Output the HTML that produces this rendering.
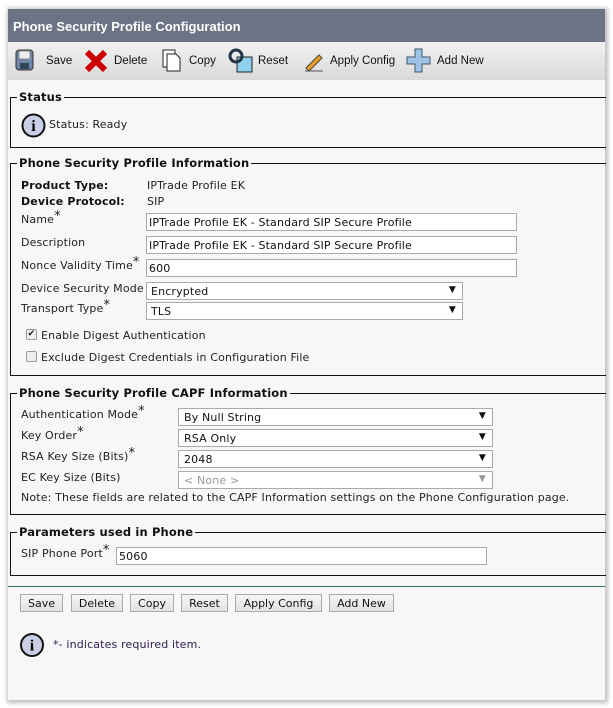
<!DOCTYPE html>
<html><head><meta charset="utf-8"><style>
*{box-sizing:border-box;margin:0;padding:0}
body{width:613px;height:708px;background:#fff;position:relative;overflow:hidden;font-family:"DejaVu Sans","Liberation Sans",sans-serif;font-size:11px;letter-spacing:0.15px;color:#222}
.a{position:absolute;white-space:nowrap}
#panel{position:absolute;left:8px;top:9px;width:597px;height:691px;background:#f7f7f7;box-shadow:1px 1px 4px 2px rgba(0,0,0,.25)}
#hdr{position:absolute;left:8px;top:9px;width:597px;height:33px;background:#6b7385;color:#fff;font:bold 13px "Liberation Sans",sans-serif;letter-spacing:0;padding:10px 0 0 5px}
#tb{position:absolute;left:8px;top:42px;width:597px;height:38px;background:linear-gradient(#f2f2f2,#d9d9d9)}
.tl{position:absolute;top:55px;font:11.5px "Liberation Sans",sans-serif;letter-spacing:0;color:#111}
.fs{position:absolute;left:10px;width:596px;border:1px solid #111;border-right:none}
.lg{position:absolute;top:-8px;left:6px;background:#f7f7f7;padding:0 2px 0 2px;font-weight:bold;font-size:11.5px;color:#111}
.in{position:absolute;height:18px;background:#fff;border:1px solid #aaa;padding:2px 2px;font-size:11px;color:#111}
.sel::after{content:"▼";position:absolute;right:6px;top:2px;font-size:9px;color:#111}
.dis{color:#999}.dis::after{color:#999}
.b{font-weight:bold;color:#111}
.btn{position:absolute;top:594px;height:18px;border:1px solid #aaa;background:linear-gradient(#f6f6f6,#e2e2e2);font-size:11px;letter-spacing:0;text-align:center;padding-top:2px;color:#111}
sup{font-size:13px;vertical-align:3px;line-height:0}
.cb{position:absolute;width:11px;height:11px;border:1px solid #999;border-radius:2px;background:#eee}
</style></head><body>
<div id="panel"></div>
<div id="hdr">Phone Security Profile Configuration</div>
<div id="tb"></div>
<svg class="a" style="left:15px;top:49px" width="19" height="22"><rect x="1" y="1" width="17" height="20" rx="3" fill="#6e86a8" stroke="#333"/><rect x="4" y="2" width="11" height="8" fill="#eee" stroke="#888"/><rect x="5" y="14" width="9" height="6" fill="#345"/></svg>
<span class="tl" style="left:46px">Save</span>
<svg class="a" style="left:84px;top:48px" width="24" height="26"><path d="M3 4 L21 22 M21 4 L3 22" stroke="#c00" stroke-width="6"/></svg>
<span class="tl" style="left:114px">Delete</span>
<svg class="a" style="left:162px;top:49px" width="20" height="23"><rect x="1" y="1" width="12" height="17" fill="#fff" stroke="#222"/><path d="M5 5 H14 L18 9 V22 H5 Z" fill="#fff" stroke="#222"/></svg>
<span class="tl" style="left:189px">Copy</span>
<svg class="a" style="left:228px;top:48px" width="26" height="26"><rect x="9" y="9" width="15" height="15" fill="#8fd0ee" stroke="#222"/><circle cx="8" cy="8" r="6" fill="none" stroke="#234" stroke-width="3"/></svg>
<span class="tl" style="left:258px">Reset</span>
<svg class="a" style="left:303px;top:50px" width="22" height="22"><path d="M3 18 L16 5 L19 8 L6 21 Z" fill="#f0a020" stroke="#444"/><path d="M2 21 H20" stroke="#555"/></svg>
<span class="tl" style="left:330px">Apply Config</span>
<svg class="a" style="left:406px;top:48px" width="25" height="25"><path d="M9 1 H16 V9 H24 V16 H16 V24 H9 V16 H1 V9 H9 Z" fill="#9cc4ea" stroke="#456"/></svg>
<span class="tl" style="left:437px">Add New</span>

<div class="fs" style="top:97px;height:51px"><span class="lg">Status</span></div>
<svg class="a" style="left:21px;top:113px" width="25" height="25"><circle cx="12.5" cy="12.5" r="11" fill="#c9cde6" stroke="#111" stroke-width="2"/><text x="12.5" y="18" text-anchor="middle" font-family="Liberation Serif" font-weight="bold" font-size="16">i</text></svg>
<span class="a" style="left:49px;top:118px">Status: Ready</span>

<div class="fs" style="top:163px;height:213px"><span class="lg">Phone Security Profile Information</span></div>
<span class="a b" style="left:21px;top:179px">Product Type:</span><span class="a" style="left:147px;top:179px">IPTrade Profile EK</span>
<span class="a b" style="left:21px;top:195px">Device Protocol:</span><span class="a" style="left:147px;top:195px">SIP</span>
<span class="a" style="left:21px;top:213px">Name<sup>*</sup></span><div class="in" style="left:146px;top:213px;width:371px">IPTrade Profile EK - Standard SIP Secure Profile</div>
<span class="a" style="left:21px;top:236px">Description</span><div class="in" style="left:146px;top:236px;width:371px">IPTrade Profile EK - Standard SIP Secure Profile</div>
<span class="a" style="left:21px;top:259px">Nonce Validity Time<sup>*</sup></span><div class="in" style="left:146px;top:259px;width:371px">600</div>
<span class="a" style="left:21px;top:282px">Device Security Mode</span><div class="in sel" style="left:146px;top:282px;width:317px;padding-left:4px">Encrypted</div>
<span class="a" style="left:21px;top:302px">Transport Type<sup>*</sup></span><div class="in sel" style="left:146px;top:302px;width:317px;padding-left:4px">TLS</div>
<div class="cb" style="left:26px;top:329px;font-size:9px;line-height:9px;text-align:center">✔</div><span class="a" style="left:41px;top:329px">Enable Digest Authentication</span>
<div class="cb" style="left:26px;top:351px"></div><span class="a" style="left:41px;top:351px">Exclude Digest Credentials in Configuration File</span>

<div class="fs" style="top:393px;height:122px"><span class="lg">Phone Security Profile CAPF Information</span></div>
<span class="a" style="left:21px;top:408px">Authentication Mode<sup>*</sup></span><div class="in sel" style="left:178px;top:408px;width:315px;padding-left:5px">By Null String</div>
<span class="a" style="left:21px;top:429px">Key Order<sup>*</sup></span><div class="in sel" style="left:178px;top:429px;width:315px;padding-left:5px">RSA Only</div>
<span class="a" style="left:21px;top:450px">RSA Key Size (Bits)<sup>*</sup></span><div class="in sel" style="left:178px;top:450px;width:315px;padding-left:5px">2048</div>
<span class="a" style="left:21px;top:471px">EC Key Size (Bits)</span><div class="in sel dis" style="left:178px;top:471px;width:315px;padding-left:5px">&lt; None &gt;</div>
<span class="a" style="left:21px;top:491px">Note: These fields are related to the CAPF Information settings on the Phone Configuration page.</span>

<div class="fs" style="top:532px;height:44px"><span class="lg">Parameters used in Phone</span></div>
<span class="a" style="left:21px;top:547px">SIP Phone Port<sup>*</sup></span><div class="in" style="left:116px;top:547px;width:371px">5060</div>

<div class="a" style="left:8px;top:586px;width:597px;height:1px;background:#2d6b6b"></div>
<div class="btn" style="left:20px;width:43px">Save</div>
<div class="btn" style="left:71px;width:52px">Delete</div>
<div class="btn" style="left:130px;width:44px">Copy</div>
<div class="btn" style="left:181px;width:47px">Reset</div>
<div class="btn" style="left:235px;width:87px">Apply Config</div>
<div class="btn" style="left:329px;width:65px">Add New</div>
<svg class="a" style="left:20px;top:633px" width="25" height="25"><circle cx="12" cy="12" r="11" fill="#c9cde6" stroke="#111" stroke-width="2"/><text x="12" y="17.5" text-anchor="middle" font-family="Liberation Serif" font-weight="bold" font-size="16">i</text></svg>
<span class="a" style="left:53px;top:638px;color:#302050">*- indicates required item.</span>
</body></html>
